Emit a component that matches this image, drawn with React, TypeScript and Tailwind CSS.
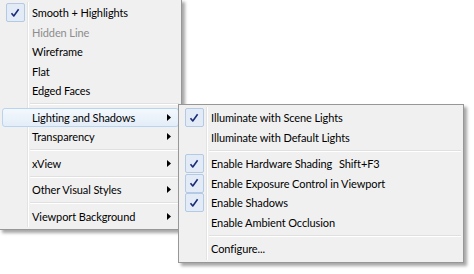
import React from 'react'

type Item =
  | { sep: true }
  | { label: string; checked?: boolean; disabled?: boolean; sub?: boolean; active?: boolean; shortcut?: string; sep?: false }

const mainItems: Item[] = [
  { label: 'Smooth + Highlights', checked: true },
  { label: 'Hidden Line', disabled: true },
  { label: 'Wireframe' },
  { label: 'Flat' },
  { label: 'Edged Faces' },
  { sep: true },
  { label: 'Lighting and Shadows', sub: true, active: true },
  { label: 'Transparency', sub: true },
  { sep: true },
  { label: 'xView', sub: true },
  { sep: true },
  { label: 'Other Visual Styles', sub: true },
  { sep: true },
  { label: 'Viewport Background', sub: true },
]

const subItems: Item[] = [
  { label: 'Illuminate with Scene Lights', checked: true },
  { label: 'Illuminate with Default Lights' },
  { sep: true },
  { label: 'Enable Hardware Shading', checked: true, shortcut: 'Shift+F3' },
  { label: 'Enable Exposure Control in Viewport', checked: true },
  { label: 'Enable Shadows', checked: true },
  { label: 'Enable Ambient Occlusion' },
  { sep: true },
  { label: 'Configure...' },
]

function CheckBox() {
  return (
    <div className="w-[19px] h-[19px] rounded-[2px] border border-[#b3c9e4] bg-[#e2ebf6] flex items-center justify-center">
      <svg width="10" height="10" viewBox="0 0 10 10">
        <path d="M1.5 5.2 L3.8 8 L8.6 1.3" fill="none" stroke="#1b2c77" strokeWidth="1.6" strokeLinejoin="round" />
      </svg>
    </div>
  )
}

function Arrow() {
  return (
    <svg width="4" height="7" viewBox="0 0 4 7" className="mr-[7px]">
      <path d="M0 0 L4 3.5 L0 7 Z" fill="#000" />
    </svg>
  )
}

function MenuRow({ item }: { item: Item }) {
  if (item.sep) {
    return (
      <div className="h-[7px] flex items-center pl-[28px]">
        <div className="w-full h-[2px] border-t border-[#e0e0e0] border-b border-b-white" />
      </div>
    )
  }
  return (
    <div
      className={`h-[19.5px] flex items-center rounded-[3px] border ${
        item.active ? 'border-[#b9d4ee] bg-gradient-to-b from-[#f4f8fd] to-[#e3edf8]' : 'border-transparent'
      }`}
    >
      <div className="w-[24px] flex justify-center shrink-0">{item.checked && <CheckBox />}</div>
      <span className={`ml-[5px] flex-1 whitespace-nowrap ${item.disabled ? 'text-[#8d8d8d]' : 'text-black'}`}>{item.label}</span>
      {item.shortcut && <span className="w-[121px] whitespace-nowrap">{item.shortcut}</span>}
      {item.sub && <Arrow />}
    </div>
  )
}

function Menu({ items, className }: { items: Item[]; className: string }) {
  return (
    <div
      className={`bg-[#f0f0f0] border border-[#979797] shadow-[3px_3px_3px_rgba(0,0,0,0.35)] py-[3px] px-[2px] ${className}`}
    >
      <div className="absolute top-[2px] bottom-[2px] left-[27px] w-[2px] border-l border-[#e2e3e3] border-r border-r-white" />
      <div className="relative">
        {items.map((it, i) => (
          <MenuRow key={i} item={it} />
        ))}
      </div>
    </div>
  )
}

export default function App() {
  return (
    <div
      className="relative w-[474px] h-[274px] bg-white overflow-hidden text-[11px] tracking-[-0.1px] leading-none"
      style={{ fontFamily: 'Lato, "Noto Sans", sans-serif' }}
    >
      <Menu items={mainItems} className="relative w-[183px] -ml-px -mt-px" />
      <Menu items={subItems} className="absolute left-[178px] top-[104px] w-[286px]" />
    </div>
  )
}
